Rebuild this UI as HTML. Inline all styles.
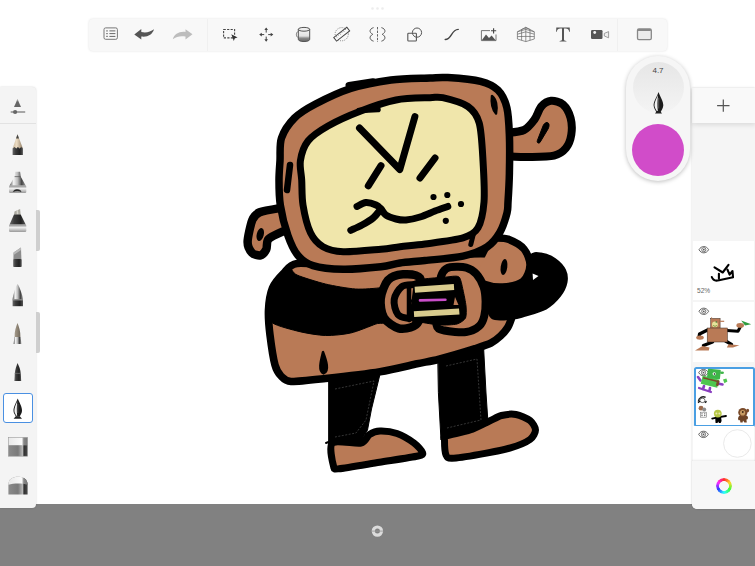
<!DOCTYPE html>
<html><head><meta charset="utf-8">
<style>
html,body{margin:0;padding:0;}
body{width:755px;height:566px;overflow:hidden;background:#818181;font-family:"Liberation Sans",sans-serif;position:relative;}
#canvas{position:absolute;left:0;top:0;width:755px;height:504px;background:#fff;}
#art{position:absolute;left:0;top:0;width:755px;height:566px;}
#toolbar{position:absolute;left:89px;top:19px;width:578px;height:32px;background:#f8f8f8;border-radius:4px;box-shadow:0 0 2.5px rgba(0,0,0,0.13);}
#toolbar .seg{position:absolute;top:0;height:32px;background:#f6f6f6;}
#left{position:absolute;left:0;top:87px;width:35.5px;height:421px;background:#f4f4f4;border-radius:0 4px 4px 0;box-shadow:0 0 2px rgba(0,0,0,0.18);}
#left .div{position:absolute;left:0;top:36px;width:36px;height:1px;background:#e2e2e2;}
#left .sel{position:absolute;left:3px;top:306px;width:28px;height:28px;border:1.5px solid #4a90e2;border-radius:3px;background:#fff;box-sizing:content-box;}
.sb{position:absolute;left:36px;width:4px;background:#cfcfcf;border-radius:0 2px 2px 0;}
#right{position:absolute;left:691.5px;top:88px;width:63.5px;height:421px;background:#f5f5f5;border-radius:0 0 0 5px;box-shadow:0 0 2px rgba(0,0,0,0.18);}
#right .plus{position:absolute;left:0;top:0;width:64px;height:35px;background:#f9f9f9;box-shadow:0 2px 5px rgba(0,0,0,0.11);}
.layer{position:absolute;left:1px;width:61px;background:#fff;}
#pill{position:absolute;left:626px;top:56px;width:64px;height:125px;border-radius:32px;background:#f6f6f6;box-shadow:0 1px 4px rgba(0,0,0,0.25);}
#pill .top{position:absolute;left:6.5px;top:6px;width:51px;height:51px;border-radius:26px;background:linear-gradient(#e6e6e6,#ededed 50%,#f4f4f4);}
#pill .col{position:absolute;left:6px;top:68px;width:52px;height:52px;border-radius:26px;background:#d14cc9;}
#pill .sz{position:absolute;left:0;top:10px;width:64px;text-align:center;font-size:8px;color:#444;}
.t{position:absolute;color:#555;}
</style></head><body>
<div id="canvas"></div>
<svg id="art" viewBox="0 0 755 566">
<!--ART-->
<path d="M332.5,443.0 C328.8,446.1 332.6,462.6 333.5,466.0 C334.4,469.4 332.9,469.3 339.0,468.8 C345.1,468.3 369.0,464.0 379.5,462.3 C390.0,460.6 412.3,457.3 418.0,456.0 C423.7,454.7 423.0,454.2 422.5,452.5 C422.0,450.8 417.4,445.5 414.0,443.0 C410.6,440.5 401.5,435.1 397.0,433.5 C392.5,431.9 383.7,430.9 380.0,431.0 C376.3,431.1 372.0,432.9 369.5,434.5 C367.0,436.1 365.9,441.9 361.0,443.0 C356.1,444.1 336.2,439.9 332.5,443.0Z" fill="#b97a56" stroke="#000" stroke-width="7" stroke-linejoin="round" stroke-linecap="round" />
<path d="M444.5,440.0 C444.5,442.5 445.0,452.6 446.0,455.0 C447.0,457.4 447.5,458.4 452.0,458.3 C456.5,458.2 471.7,455.8 479.5,454.4 C487.3,453.0 503.8,449.9 510.5,447.9 C517.2,445.9 526.7,441.9 530.0,439.5 C533.3,437.1 535.5,432.5 535.5,430.0 C535.5,427.5 532.6,422.6 530.0,420.5 C527.4,418.4 519.8,415.2 516.0,414.5 C512.2,413.8 505.0,414.6 501.5,415.5 C498.0,416.4 493.7,419.1 489.5,421.0 C485.3,422.9 475.8,428.0 470.0,430.0 C464.2,432.0 449.4,434.7 446.0,436.0 C442.6,437.3 444.5,437.5 444.5,440.0Z" fill="#b97a56" stroke="#000" stroke-width="7" stroke-linejoin="round" stroke-linecap="round" />
<path d="M329.0,376.0 L382.0,366.0 L371.5,409.0 L367.5,430.0 L360.0,443.0 L329.0,444.0Z" fill="#000" stroke="#000" stroke-width="1" stroke-linejoin="round" stroke-linecap="round" />
<path d="M438.0,352.0 L483.4,344.0 L486.0,393.0 L487.6,417.0 L487.6,425.0 L444.0,434.0 L441.0,440.0 L438.4,393.0Z" fill="#000" stroke="#000" stroke-width="1" stroke-linejoin="round" stroke-linecap="round" />
<path d="M326,443 L331,441" fill="none" stroke="#000" stroke-width="2" stroke-linejoin="round" stroke-linecap="round" />
<path d="M335,389 L374,381 L366,420 L356,433 L335,437" fill="none" stroke="#6a6a6a" stroke-width="0.5" stroke-dasharray="2 1.5"/>
<path d="M446,366 L477,359 L481,420 L447,428" fill="none" stroke="#6a6a6a" stroke-width="0.5" stroke-dasharray="2 1.5"/>
<path d="M297.0,263.5 C289.1,264.6 286.8,270.2 283.5,273.5 C280.2,276.8 274.5,283.1 272.5,288.0 C270.5,292.9 268.8,303.7 268.5,310.0 C268.2,316.3 269.1,327.7 270.0,335.0 C270.9,342.3 273.5,359.5 275.0,365.0 C276.5,370.5 278.9,373.8 281.0,376.0 C283.1,378.2 285.1,381.2 291.0,381.5 C296.9,381.8 313.6,379.8 325.5,378.5 C337.4,377.2 367.8,373.7 380.0,371.7 C392.2,369.7 409.1,365.5 417.0,363.8 C424.9,362.1 431.3,361.2 439.0,359.2 C446.7,357.2 468.1,350.9 475.0,348.7 C481.9,346.5 487.6,344.7 491.0,343.0 C494.4,341.3 498.2,338.1 500.5,336.0 C502.8,333.9 506.3,329.9 508.0,327.0 C509.7,324.1 511.4,318.9 513.0,314.0 C514.6,309.1 521.7,297.9 520.0,290.0 C518.3,282.1 516.0,259.3 500.0,255.0 C484.0,250.7 420.9,256.7 400.0,258.0 C379.1,259.3 356.7,264.3 343.0,265.0 C329.3,265.7 304.9,262.4 297.0,263.5Z" fill="#b97a56" stroke="#000" stroke-width="7.6" stroke-linejoin="round" stroke-linecap="round" />
<path d="M290.0,268.0 C292.0,268.3 292.3,272.9 297.0,275.0 C301.7,277.1 317.7,282.1 325.5,284.0 C333.3,285.9 348.3,288.5 355.7,289.0 C363.1,289.5 376.7,288.2 381.0,287.7 C385.3,287.2 387.3,280.7 388.0,285.0 C388.7,289.3 387.6,314.8 386.0,320.0 C384.4,325.2 380.5,322.3 375.8,324.0 C371.1,325.7 357.4,331.5 350.7,333.0 C344.0,334.5 332.3,335.7 325.5,335.5 C318.7,335.3 307.1,333.4 300.0,331.7 C292.9,330.0 276.8,325.9 272.6,323.0 C268.4,320.1 268.5,314.7 268.5,310.0 C268.5,305.3 270.7,292.9 272.5,288.0 C274.3,283.1 279.7,275.7 282.0,273.0 C284.3,270.3 288.0,267.7 290.0,268.0Z" fill="#000" stroke="#000" stroke-width="1" stroke-linejoin="round" stroke-linecap="round" />
<path d="M323,352 C321,360 317.8,371 323.5,373.5 C330,371 326,360 323,352Z" fill="#000" stroke="#000" stroke-width="2.4" stroke-linejoin="round" stroke-linecap="round" />
<path d="M530.5,256.0 C532.7,252.2 536.9,253.0 541.0,253.5 C545.1,254.0 551.0,256.2 555.0,259.0 C559.0,261.8 563.1,266.1 565.0,270.0 C566.9,273.9 567.3,278.1 566.5,282.4 C565.7,286.7 563.4,291.6 560.0,296.0 C556.6,300.4 552.0,305.2 546.0,308.5 C540.0,311.8 529.5,314.3 524.0,316.0 C518.5,317.7 518.3,318.2 513.0,318.5 C507.7,318.8 496.5,321.1 492.0,318.0 C487.5,314.9 487.3,306.2 486.0,300.0 C484.7,293.8 481.7,283.8 484.0,281.0 C486.3,278.2 494.3,282.7 500.0,283.0 C505.7,283.3 513.3,284.2 518.0,283.0 C522.7,281.8 525.9,280.5 528.0,276.0 C530.1,271.5 528.3,259.8 530.5,256.0Z" fill="#000" stroke="#000" stroke-width="2" stroke-linejoin="round" stroke-linecap="round" />
<path d="M532.6,273.5 L538.5,276.0 L533.0,280.0Z" fill="#fff" stroke="none" stroke-width="0" stroke-linejoin="round" stroke-linecap="round" />
<path d="M494.6,238.0 C496.8,238.2 504.6,237.8 509.0,239.5 C513.4,241.2 520.9,245.2 524.0,249.0 C527.1,252.8 530.1,260.1 530.0,265.0 C529.9,269.9 527.1,278.2 523.0,281.5 C518.9,284.8 508.5,286.6 502.6,287.0 C496.7,287.4 487.6,285.5 483.5,284.0 C479.4,282.5 476.3,278.1 475.0,277.0" fill="#b97a56" stroke="#000" stroke-width="7.5" stroke-linejoin="round" stroke-linecap="round" />
<ellipse cx="504" cy="267" rx="3.3" ry="8" fill="#000" transform="rotate(8 504 267)"/>
<path d="M443.0,272.0 C444.5,269.8 446.8,267.9 450.3,267.2 C453.8,266.5 462.3,266.6 466.2,267.6 C470.1,268.6 473.8,271.1 476.4,274.0 C479.0,276.9 482.2,282.9 483.6,287.0 C485.0,291.1 485.5,297.1 485.6,301.5 C485.7,305.9 485.2,312.3 484.3,316.0 C483.4,319.7 482.0,323.6 479.3,326.0 C476.6,328.4 471.4,331.3 466.2,332.0 C461.0,332.7 449.0,331.6 444.5,330.5 C440.0,329.4 437.2,329.6 436.5,325.0 C435.8,320.4 439.5,306.4 440.0,300.0 C440.5,293.6 439.6,286.2 440.0,282.0 C440.4,277.8 441.5,274.2 443.0,272.0Z" fill="#b97a56" stroke="#000" stroke-width="8" stroke-linejoin="round" stroke-linecap="round" />
<path d="M420.0,278.0 C417.3,274.1 407.8,274.0 403.0,274.3 C398.2,274.6 391.3,276.5 388.0,280.2 C384.7,283.9 381.3,293.1 380.7,298.7 C380.1,304.3 381.3,313.3 384.0,317.8 C386.7,322.3 394.3,327.1 398.7,328.4 C403.1,329.7 410.4,327.9 413.6,326.3 C416.8,324.7 418.9,321.7 420.0,317.8 C421.1,313.9 421.0,306.0 421.0,300.0 C421.0,294.0 422.7,281.9 420.0,278.0Z" fill="#b97a56" stroke="#000" stroke-width="8.5" stroke-linejoin="round" stroke-linecap="round" />
<path d="M411.0,283.0 C415.2,278.1 441.4,277.7 447.0,277.0 C452.6,276.3 457.1,275.5 459.0,277.0 C460.9,278.5 462.2,286.6 463.0,290.0 C463.8,293.4 465.7,302.7 466.0,306.0 C466.3,309.3 466.6,315.9 465.5,318.0 C464.4,320.1 460.0,323.2 457.0,324.0 C454.0,324.8 444.3,325.2 440.0,325.0 C435.7,324.8 423.4,322.7 420.0,322.0 C416.6,321.3 412.1,323.6 411.0,319.0 C409.9,314.4 406.8,287.9 411.0,283.0Z" fill="#000" stroke="#000" stroke-width="1" stroke-linejoin="round" stroke-linecap="round" />
<path d="M413.6,284.6 C411.7,284.9 405.2,284.0 402.0,286.5 C398.8,289.0 394.9,294.8 394.2,299.5 C393.5,304.2 395.5,311.4 398.0,314.6 C400.5,317.8 407.4,317.9 409.3,318.6" fill="#b97a56" stroke="#000" stroke-width="7" stroke-linejoin="round" stroke-linecap="round" />
<path d="M409,288 L409,315" fill="none" stroke="#000" stroke-width="4.5" stroke-linejoin="round" stroke-linecap="round" />
<path d="M409,301 L413,301" fill="none" stroke="#000" stroke-width="3" stroke-linejoin="round" stroke-linecap="round" />
<path d="M414.6,286.8 L453.8,284.0 L454.2,290.0 L415.0,292.8Z" fill="#d9cc8e" stroke="none" stroke-width="0" stroke-linejoin="round" stroke-linecap="round" />
<path d="M413.8,311.2 L459.0,308.6 L459.5,314.4 L414.2,317.0Z" fill="#d9cc8e" stroke="none" stroke-width="0" stroke-linejoin="round" stroke-linecap="round" />
<path d="M420,300.4 L445.4,299.8" fill="none" stroke="#c94ec9" stroke-width="2.6" stroke-linejoin="round" stroke-linecap="round" />
<path d="M455.0,297.0 L458.5,305.0 L453.5,305.0Z" fill="#b97a56" stroke="none" stroke-width="0" stroke-linejoin="round" stroke-linecap="round" />
<path d="M506.0,133.0 C508.7,132.6 519.7,132.0 524.0,130.0 C528.3,128.0 531.9,123.0 534.5,119.5 C537.1,116.0 538.8,109.3 541.3,106.5 C543.8,103.7 547.7,101.1 551.0,100.8 C554.3,100.5 560.1,101.9 563.0,104.5 C565.9,107.1 569.4,113.5 570.6,118.0 C571.8,122.5 572.0,130.1 571.3,134.6 C570.6,139.1 568.6,144.8 566.0,148.0 C563.4,151.2 559.4,154.2 554.0,155.6 C548.6,156.9 537.2,156.9 530.0,157.0 C522.8,157.1 509.6,156.2 506.0,156.0" fill="#b97a56" stroke="#000" stroke-width="8" stroke-linejoin="round" stroke-linecap="round" />
<path d="M546.8,122.6 C549.6,122.4 549.6,126 548,129 L540,142.4 C538.4,144 536.6,142.6 537.4,140.4 L543,126 C543.8,124 545,122.8 546.8,122.6Z" fill="#000" stroke="#000" stroke-width="1" stroke-linejoin="round" stroke-linecap="round" />
<path d="M283.0,207.5 C279.9,208.1 263.8,210.6 259.7,212.3 C255.6,214.0 253.9,216.0 252.3,220.0 C250.7,224.0 247.6,237.6 247.6,242.0 C247.6,246.4 250.3,251.0 252.0,252.8 C253.7,254.6 258.6,255.8 260.5,255.3 C262.4,254.8 265.2,251.6 266.3,249.4 C267.4,247.2 266.1,241.5 268.6,239.0 C271.1,236.5 282.8,231.6 285.0,230.5" fill="#b97a56" stroke="#000" stroke-width="8.5" stroke-linejoin="round" stroke-linecap="round" />
<ellipse cx="260.4" cy="234.6" rx="3.5" ry="6.6" fill="#000" transform="rotate(15 260.7 234)"/>
<path d="M294.5,118.0 C299.6,112.9 307.1,108.4 315.5,104.0 C323.9,99.6 339.4,92.1 350.7,88.5 C362.0,84.9 379.1,81.6 391.0,80.0 C402.9,78.4 421.5,78.4 430.0,78.0 C438.5,77.6 440.1,77.1 447.7,77.6 C455.3,78.1 473.0,79.5 480.5,81.4 C488.0,83.3 494.0,86.2 498.0,90.2 C502.0,94.2 505.2,101.0 506.9,107.8 C508.6,114.6 509.0,125.7 509.4,135.5 C509.8,145.3 509.6,163.0 509.4,173.0 C509.2,183.0 508.4,196.0 508.0,202.0 C507.6,208.0 508.2,208.4 507.0,213.0 C505.8,217.6 502.8,227.4 499.8,232.5 C496.8,237.6 492.5,243.4 487.0,247.0 C481.5,250.6 472.3,254.2 463.0,256.2 C453.7,258.2 434.4,259.5 425.0,260.5 C415.6,261.5 406.6,262.1 400.0,263.0 C393.4,263.9 389.5,265.9 381.0,266.8 C372.5,267.7 353.4,269.5 343.2,269.3 C333.0,269.1 319.8,267.7 313.0,265.6 C306.2,263.5 301.8,260.0 298.0,255.5 C294.2,251.0 290.6,243.0 287.9,235.4 C285.2,227.8 281.6,213.3 280.3,205.0 C279.0,196.7 279.0,186.6 279.0,180.0 C279.0,173.4 279.6,167.0 280.0,160.7 C280.4,154.4 279.3,144.4 281.5,138.0 C283.7,131.6 289.4,123.1 294.5,118.0Z" fill="#b97a56" stroke="#000" stroke-width="7.5" stroke-linejoin="round" stroke-linecap="round" />
<path d="M308.0,141.0 C312.1,135.8 320.1,130.5 328.0,126.0 C335.9,121.5 350.6,114.9 360.8,111.0 C371.0,107.1 385.6,102.0 396.0,100.0 C406.4,98.0 423.0,98.0 430.0,97.7 C437.0,97.4 437.0,96.4 442.7,97.7 C448.4,99.0 462.4,102.7 467.9,106.5 C473.4,110.3 476.9,114.9 479.2,123.0 C481.5,131.1 482.3,148.8 483.0,160.7 C483.7,172.5 484.8,191.9 484.0,202.0 C483.2,212.1 481.1,222.4 478.0,227.8 C474.9,233.2 470.9,235.5 463.0,237.9 C455.1,240.3 434.4,242.7 425.0,244.0 C415.6,245.3 406.6,245.9 400.0,246.7 C393.4,247.5 389.5,248.4 381.0,249.2 C372.5,249.9 351.9,252.1 343.2,251.7 C334.5,251.3 327.9,249.5 323.0,246.7 C318.1,243.9 313.5,239.1 310.5,232.8 C307.5,226.5 304.3,212.9 303.0,205.0 C301.7,197.1 302.1,186.6 301.7,180.0 C301.3,173.4 299.5,166.5 300.4,160.7 C301.3,154.8 303.9,146.2 308.0,141.0Z" fill="#f0e6ab" stroke="#000" stroke-width="7" stroke-linejoin="round" stroke-linecap="round" />
<path d="M290,165 L287,190" fill="none" stroke="#000" stroke-width="6.5" stroke-linejoin="round" stroke-linecap="round" />
<path d="M349,85.4 L373,81.8" fill="none" stroke="#000" stroke-width="7" stroke-linejoin="round" stroke-linecap="round" />
<path d="M359,110.6 L378,109.6" fill="none" stroke="#000" stroke-width="5.5" stroke-linejoin="round" stroke-linecap="round" />
<path d="M492,96 C491,104 493,110 496,113.5 C497.5,106 496,99 492,96Z" fill="#000" stroke="#000" stroke-width="2.5" stroke-linejoin="round" stroke-linecap="round" />
<path d="M473.4,234 L470.8,244.5" fill="none" stroke="#000" stroke-width="5" stroke-linejoin="round" stroke-linecap="round" />
<path d="M359.5,128 L399.8,169.5 L414.9,116.6" fill="none" stroke="#000" stroke-width="7" stroke-linejoin="round" stroke-linecap="round" />
<path d="M381,165.7 L368.3,185.8" fill="none" stroke="#000" stroke-width="7" stroke-linejoin="round" stroke-linecap="round" />
<path d="M435,158 L420,178" fill="none" stroke="#000" stroke-width="7" stroke-linejoin="round" stroke-linecap="round" />
<path d="M357.0,206.4 C358.5,205.8 362.7,202.8 365.9,202.6 C369.1,202.4 373.5,203.9 376.0,205.0 C378.5,206.1 379.3,207.3 381.0,209.0 C382.7,210.7 383.5,213.5 386.0,215.2 C388.5,216.9 392.7,218.2 396.0,219.0 C399.3,219.8 402.0,220.3 406.0,220.0 C410.0,219.7 415.2,218.5 420.0,217.0 C424.8,215.5 430.4,212.8 435.0,211.0 C439.6,209.2 445.7,207.2 447.8,206.4" fill="none" stroke="#000" stroke-width="7" stroke-linejoin="round" stroke-linecap="round" />
<path d="M350.8,230.3 C352.7,229.4 358.2,227.1 362.0,225.0 C365.8,222.9 370.2,220.4 373.4,217.7 C376.6,215.0 379.7,210.4 381.0,209.0" fill="none" stroke="#000" stroke-width="7" stroke-linejoin="round" stroke-linecap="round" />
<circle cx="433.5" cy="197" r="3.1" fill="#000"/>
<circle cx="447.3" cy="195" r="3.1" fill="#000"/>
<circle cx="461" cy="204" r="3.1" fill="#000"/>
<circle cx="445.8" cy="220.8" r="3.1" fill="#000"/>
<!--/ART-->
</svg>
<div id="toolbar">
<div class="seg" style="left:118px;width:1px;background:#f0f0f0"></div>
<div class="seg" style="left:528px;width:1px;background:#f0f0f0"></div>
<svg width="578" height="32" viewBox="89 19 578 32" style="position:absolute;left:0;top:0">
<!--TB-->
<rect x="104" y="27.9" width="13.4" height="11.4" rx="1.6" fill="none" stroke="#777" stroke-width="1"/>
<rect x="106.3" y="30.3" width="1.4" height="1.2" fill="#666"/>
<rect x="109.4" y="30.4" width="6" height="1" fill="#666"/>
<rect x="106.3" y="33.0" width="1.4" height="1.2" fill="#666"/>
<rect x="109.4" y="33.1" width="6" height="1" fill="#666"/>
<rect x="106.3" y="35.8" width="1.4" height="1.2" fill="#666"/>
<rect x="109.4" y="35.9" width="6" height="1" fill="#666"/>
<path d="M134.3,34.4 L141.3,29 L141.3,32 C146,33 150.5,32 154,29.3 C152.5,34.5 147.5,37.5 141.3,36.6 L141.3,39.4 Z" fill="#555"/>
<path d="M134.3,34.4 L141.3,29 L141.3,32 C146,33 150.5,32 154,29.3 C152.5,34.5 147.5,37.5 141.3,36.6 L141.3,39.4 Z" fill="#bdbdbd" transform="rotate(180 163.4 34.3)"/>
<rect x="223.6" y="29.5" width="11" height="8.4" fill="none" stroke="#444" stroke-width="1.1" stroke-dasharray="2.2 1.3"/>
<path d="M231.3,34.2 L237.6,37.6 L234.8,38.2 L233.8,41 Z" fill="#333"/>
<g stroke="#444" stroke-width="1" fill="none"><path d="M266.2,28.5 V32.6 M266.2,36.6 V40.7 M260.2,34.6 H264.2 M268.2,34.6 H272.3"/></g>
<g fill="#444"><path d="M266.2,27.4 L268,30 H264.4Z"/><path d="M266.2,41.8 L268,39.2 H264.4Z"/><path d="M259.2,34.6 L261.8,32.8 V36.4Z"/><path d="M273.3,34.6 L270.7,32.8 V36.4Z"/></g>
<defs><linearGradient id="bk" x1="0" y1="0" x2="0" y2="1"><stop offset="0" stop-color="#f4f4f4"/><stop offset="0.55" stop-color="#e2e2e2"/><stop offset="0.72" stop-color="#8a8a8a"/><stop offset="1" stop-color="#666"/></linearGradient></defs>
<path d="M298.3,29.3 V39.3 C298.3,42.3 309.7,42.3 309.7,39.3 V29.3Z" fill="url(#bk)" stroke="#555" stroke-width="1"/>
<ellipse cx="304" cy="29.3" rx="5.7" ry="1.9" fill="#eee" stroke="#555" stroke-width="1"/>
<path d="M299,31 C295.5,32 295.5,37 299,38" fill="none" stroke="#666" stroke-width="0.9"/>
<circle cx="341.7" cy="34.2" r="6.6" fill="none" stroke="#666" stroke-width="0.8" stroke-dasharray="1 1.2"/>
<g transform="rotate(-38 341.7 34.2)"><rect x="333.4" y="31.9" width="16.6" height="4.6" fill="#f9f9f9" stroke="#444" stroke-width="1"/><path d="M336,31.9 v2 M338.3,31.9 v1.5 M340.6,31.9 v2 M342.9,31.9 v1.5 M345.2,31.9 v2 M347.5,31.9 v1.5" stroke="#666" stroke-width="0.6"/></g>
<path d="M377.5,27 V42" stroke="#555" stroke-width="0.9" stroke-dasharray="2.4 1.2" fill="none"/>
<path d="M373.6,27.6 C369,29 369,32.5 372.8,34.3 C369,36.2 369,39.8 373.6,41.2" fill="none" stroke="#555" stroke-width="0.95"/>
<path d="M381.4,27.6 C386,29 386,32.5 382.2,34.3 C386,36.2 386,39.8 381.4,41.2" fill="none" stroke="#555" stroke-width="0.95"/>
<circle cx="417" cy="32.6" r="4.6" fill="none" stroke="#555" stroke-width="1"/>
<rect x="407.8" y="33.2" width="8.6" height="7.8" rx="0.8" fill="none" stroke="#555" stroke-width="1.1"/>
<path d="M445.2,39.5 C452,39.5 451,29.6 458.2,29.4" fill="none" stroke="#444" stroke-width="1.4" stroke-linecap="round"/>
<path d="M490,30.6 H481.4 V40.6 H496 V34.5" fill="none" stroke="#666" stroke-width="0.9"/>
<path d="M481.8,40.2 L486,34.6 L489,38 L491.6,35.6 L495.6,40.2Z" fill="#555"/>
<path d="M493.6,28.2 V33.4 M491,30.8 H496.2" stroke="#444" stroke-width="1.1"/>
<g fill="none" stroke="#666" stroke-width="0.7"><path d="M525.8,27.2 L517.4,31.8 V39 L525.8,41.6 L534.3,39 V31.8Z"/><path d="M525.8,27.2 V41.6 M521.6,29.5 V40.3 M530,29.5 V40.3 M517.4,34.2 L525.8,31.8 L534.3,34.2 M517.4,36.6 L525.8,36.4 L534.3,36.6 M517.4,31.8 L525.8,29.4 L534.3,31.8 M521.6,29.5 L525.8,27.9 L530,29.5"/></g>
<path d="M556.3,27.6 H569.7 L569.9,31.8 H569.2 C568.8,29.4 567.8,28.5 565.6,28.5 H564 V39.2 C564,40.5 564.5,40.8 566.4,40.9 V41.5 H559.6 V40.9 C561.5,40.8 562,40.5 562,39.2 V28.5 H560.4 C558.2,28.5 557.2,29.4 556.8,31.8 H556.1Z" fill="#555"/>
<rect x="591" y="30" width="11.5" height="9" rx="1.2" fill="#555"/>
<circle cx="594.7" cy="32.5" r="1.4" fill="#f4f4f4"/>
<path d="M604.3,33.4 L608.6,31.6 V37.8 L604.3,36Z" fill="#eee" stroke="#888" stroke-width="0.8"/>
<rect x="637.5" y="29" width="13.8" height="10.6" rx="1.4" fill="#ececec" stroke="#888" stroke-width="1.3"/>
<rect x="638" y="29" width="12.8" height="2" fill="#888"/>
<!--/TB-->
</svg>
</div>
<div id="left"><div class="div"></div><div class="sel"></div></div>
<div class="sb" style="top:210px;height:41px"></div>
<div class="sb" style="top:312px;height:41px"></div>
<div id="right"><div class="plus"></div>
<div class="layer" style="top:153px;height:59px"></div>
<div class="layer" style="top:214px;height:60px"></div>
<div class="layer" style="top:278.5px;height:56.5px;border:2px solid #4a9fe3;border-radius:2.5px;left:2px;width:57.5px;"></div>
<div class="layer" style="top:337.5px;height:35px"></div>
<div style="position:absolute;left:0;top:373px;width:64px;height:48px;background:#f7f7f7;border-radius:0 0 0 5px;box-shadow:0 -1px 2px rgba(0,0,0,0.08)"></div>
<div style="position:absolute;left:24.4px;top:389.6px;width:16px;height:16px;border-radius:50%;background:conic-gradient(from 0deg,#ff2a2a,#ffd92a,#3cff3c,#2affff,#2a3cff,#ff2aff,#ff2a2a);-webkit-mask:radial-gradient(circle,transparent 4.6px,#000 5.2px);mask:radial-gradient(circle,transparent 4.6px,#000 5.2px)"></div>
</div>
<div id="pill"><div class="top"></div><div class="col"></div><div class="sz">4.7</div></div>
<svg id="ui" viewBox="0 0 755 566" style="position:absolute;left:0;top:0;width:755px;height:566px">
<!--UI-->
<defs>
<linearGradient id="chrome" x1="0" y1="0" x2="1" y2="0"><stop offset="0" stop-color="#555"/><stop offset="0.25" stop-color="#f4f4f4"/><stop offset="0.5" stop-color="#bbb"/><stop offset="0.75" stop-color="#444"/><stop offset="1" stop-color="#999"/></linearGradient>
<linearGradient id="dark" x1="0" y1="0" x2="1" y2="0"><stop offset="0" stop-color="#666"/><stop offset="0.3" stop-color="#3a3a3a"/><stop offset="0.7" stop-color="#222"/><stop offset="1" stop-color="#555"/></linearGradient>
<linearGradient id="wood" x1="0" y1="0" x2="1" y2="0"><stop offset="0" stop-color="#c9b79c"/><stop offset="0.4" stop-color="#ecdcc3"/><stop offset="1" stop-color="#8d7a62"/></linearGradient>
<linearGradient id="silver" x1="0" y1="0" x2="0" y2="1"><stop offset="0" stop-color="#888"/><stop offset="0.4" stop-color="#eee"/><stop offset="1" stop-color="#999"/></linearGradient>
<linearGradient id="er" x1="0" y1="0" x2="1" y2="0"><stop offset="0" stop-color="#8b8b8b"/><stop offset="0.5" stop-color="#7a7a7a"/><stop offset="0.76" stop-color="#bdbdbd"/><stop offset="0.8" stop-color="#2e2e2e"/><stop offset="1" stop-color="#4a4a4a"/></linearGradient>
<linearGradient id="ert" x1="0" y1="0" x2="1" y2="0"><stop offset="0" stop-color="#e9e9e9"/><stop offset="0.7" stop-color="#fafafa"/><stop offset="0.8" stop-color="#888"/><stop offset="1" stop-color="#777"/></linearGradient>
<linearGradient id="tan" x1="0" y1="0" x2="1" y2="0"><stop offset="0" stop-color="#a59b8c"/><stop offset="0.5" stop-color="#8d8374"/><stop offset="1" stop-color="#6f675b"/></linearGradient>
</defs>
<path d="M17.5,99.3 L21,107 H14Z" fill="#666"/><path d="M16.6,101.2 H18.4 L17.5,99.3Z" fill="#999"/>
<path d="M10.7,112 H25.2" stroke="#666" stroke-width="1.1"/><circle cx="15.1" cy="112" r="2.1" fill="#666"/>
<path d="M17.5,134.3 L22.9,148.5 H12.6Z" fill="url(#wood)"/>
<path d="M17.5,134.3 L19,138.4 H16Z" fill="#444"/>
<path d="M12.6,148.5 L14.5,147 L16.3,148.5 L17.9,147 L19.6,148.5 L21.2,147 L22.9,148.5 V155 H12.6Z" fill="url(#dark)"/>
<path d="M15.2,171.8 H20.1 L20.8,176.8 L25.7,185.6 H9.6 L14.5,176.8Z" fill="url(#chrome)"/>
<path d="M14.6,176.6 H20.7" stroke="#555" stroke-width="0.7"/>
<rect x="9" y="185.6" width="17.3" height="7.3" rx="1.2" fill="url(#silver)"/>
<path d="M13.4,191.4 C14.4,189.2 19.6,189 21,191.4 C19,190.6 15.4,190.6 13.4,191.4Z" fill="#222" stroke="#222" stroke-width="0.8"/>
<path d="M14.5,211.5 L20.1,209 L20.7,214.8 H14Z" fill="#aaa89f"/><path d="M16.5,210.6 L18,210 L18.4,214.8 H16.8Z" fill="#d6d4cc"/>
<path d="M14,214.6 H20.7 L25.7,224.6 H9.6Z" fill="url(#dark)"/>
<rect x="9" y="224.6" width="17.3" height="7.4" rx="1.2" fill="url(#silver)"/>
<path d="M13.6,252.6 L21,247.4 L21.4,259.2 H13.4Z" fill="#8c8c8c"/><path d="M13.6,252.6 L21,247.4 L21.1,250 L13.6,255Z" fill="#b8b8b8"/>
<rect x="13.2" y="259" width="8.5" height="8" rx="0.8" fill="url(#dark)"/>
<path d="M17.5,283.9 C18.6,284.5 23,296 23,299.6 H12.6 C12.6,296 16.4,284.5 17.5,283.9Z" fill="url(#chrome)"/>
<rect x="12.6" y="299.4" width="10.4" height="6.8" fill="url(#dark)"/><rect x="12.6" y="299.4" width="10.4" height="1" fill="#999"/>
<path d="M17.5,323 C19,327 20.6,331 20.4,337.2 H14.6 C14.4,331 16,327 17.5,323Z" fill="url(#tan)"/>
<path d="M14.4,337 H20.6 L21.4,344 H13.6Z" fill="url(#chrome)"/>
<path d="M17.5,363 C19,366 20.6,370 20.8,373.5 L21.2,381 H14.4 L14.8,373.5 C15,370 16.4,366 17.5,363Z" fill="url(#dark)"/>
<path d="M14.7,373.4 H21" stroke="#777" stroke-width="0.7"/>
<path d="M17.7,398.6 C19,402 22.3,407 22,411 C21.8,413.5 20.4,415 19.8,416.4 H15.8 C15.2,415 13.6,413.5 13.5,411 C13.3,407 16.6,402 17.7,398.6Z" fill="#1c1c1c"/>
<path d="M17.3,401.2 C15.6,405 14.2,408.4 14.4,411 C14.6,413 15.6,414.4 16.4,415.8 H17.2 C16.6,411 16.8,406 17.3,401.2Z" fill="#f0f0f0"/>
<path d="M17.8,404 V413" stroke="#777" stroke-width="0.6"/>
<path d="M15.8,416.2 H19.8 L22,418.8 H13.6Z" fill="#222"/>
<rect x="8.4" y="437.4" width="19.2" height="8" fill="url(#ert)"/>
<rect x="8.4" y="445.2" width="19.2" height="11" fill="url(#er)"/>
<rect x="8.4" y="437.4" width="19.2" height="18.8" fill="none" stroke="#9a9a9a" stroke-width="0.6"/>
<path d="M8.4,494.4 V484 C8.4,474.2 27.6,474.2 27.6,484 V494.4Z" fill="url(#er)"/>
<path d="M8.4,484 C8.4,474.2 27.6,474.2 27.6,484 V484.8 C22,483 14,483 8.4,484.8Z" fill="url(#ert)"/>
<circle cx="377.4" cy="531.1" r="4.1" fill="none" stroke="#dcdcdc" stroke-width="3.2"/><path d="M371.5,531.1 H383.3" stroke="#9a9a9a" stroke-width="0.9"/>
<g fill="#ededed"><circle cx="372.5" cy="8.5" r="1.3"/><circle cx="377.5" cy="8.5" r="1.3"/><circle cx="382.5" cy="8.5" r="1.3"/></g>
<path d="M658.5,91.9 C659.8,96 663.6,101 663.3,105.6 C663.1,108.6 661.4,110.4 660.7,112 H656.3 C655.6,110.4 653.8,108.6 653.6,105.6 C653.3,101 657.4,96 658.5,91.9Z" fill="#1c1c1c"/>
<path d="M658,95 C656.2,99.4 654.3,102.6 654.5,105.6 C654.7,107.8 655.8,109.4 656.8,111 H657.8 C657.2,106 657.4,100 658,95Z" fill="#f2f2f2"/>
<path d="M658.7,98 V108.5" stroke="#888" stroke-width="0.6"/>
<path d="M656.3,111.8 H660.7 L662,113.4 H655Z" fill="#222"/>
<path d="M723.3,99.4 V111.8 M717.1,105.6 H729.5" stroke="#555" stroke-width="1.2"/>
<path d="M699.0,249.7 C701.2,245.5 706.4,245.5 708.6,249.7 C706.4,253.9 701.2,253.9 699.0,249.7 Z" fill="#fff" stroke="#555" stroke-width="0.9"/><circle cx="703.8" cy="249.7" r="2.1" fill="none" stroke="#555" stroke-width="0.8"/><circle cx="703.8" cy="249.7" r="0.9" fill="#555"/>
<path d="M699.0,311.3 C701.2,307.1 706.4,307.1 708.6,311.3 C706.4,315.5 701.2,315.5 699.0,311.3 Z" fill="#fff" stroke="#555" stroke-width="0.9"/><circle cx="703.8" cy="311.3" r="2.1" fill="none" stroke="#555" stroke-width="0.8"/><circle cx="703.8" cy="311.3" r="0.9" fill="#555"/>
<path d="M698.7,372.6 C700.9,368.4 706.1,368.4 708.3,372.6 C706.1,376.8 700.9,376.8 698.7,372.6 Z" fill="#fff" stroke="#555" stroke-width="0.9"/><circle cx="703.5" cy="372.6" r="2.1" fill="none" stroke="#555" stroke-width="0.8"/><circle cx="703.5" cy="372.6" r="0.9" fill="#555"/>
<path d="M698.7,434.4 C700.9,430.2 706.1,430.2 708.3,434.4 C706.1,438.6 700.9,438.6 698.7,434.4 Z" fill="#fff" stroke="#555" stroke-width="0.9"/><circle cx="703.5" cy="434.4" r="2.1" fill="none" stroke="#555" stroke-width="0.8"/><circle cx="703.5" cy="434.4" r="0.9" fill="#555"/>
<g fill="none" stroke="#000" stroke-width="2.1" stroke-linecap="round" stroke-linejoin="round"><path d="M714.5,267.3 L722.7,272.5 L728.5,264.8"/><path d="M727.4,269.5 L729.6,274.7 L732.5,271 L733,277.2"/><path d="M711.8,277 C713,280.5 716,281 719,280.2 L733,277.2"/><path d="M718.9,273.8 V278.6"/></g>
<text x="697" y="293.2" font-family="Liberation Sans, sans-serif" font-size="6.6" fill="#666">52%</text>
<g>
<path d="M707.5,330 L699.5,334 L699,337" fill="none" stroke="#000" stroke-width="3.2" stroke-linecap="round" stroke-linejoin="round"/>
<path d="M727,330.6 L738,331.2 L740.5,326.5" fill="none" stroke="#000" stroke-width="3" stroke-linecap="round" stroke-linejoin="round"/>
<path d="M712.5,342 L703.5,345.5" fill="none" stroke="#000" stroke-width="3.4" stroke-linecap="round"/>
<path d="M725.6,341 L731.5,344.4" fill="none" stroke="#000" stroke-width="3.4" stroke-linecap="round"/>
<rect x="710.7" y="318.4" width="9.4" height="9.8" fill="#b97a56" stroke="#3a2a20" stroke-width="0.5"/>
<path d="M711,318.6 L711.4,316.8 L712.6,318.6Z" fill="#b97a56"/>
<path d="M720,321.3 H724.2" stroke="#b97a56" stroke-width="1.2"/>
<circle cx="714.9" cy="324.4" r="2.9" fill="#e6e39a"/><path d="M713,325.2 C714,326.6 716,326.6 717,325.2" stroke="#5a7d2a" stroke-width="0.7" fill="none"/><circle cx="716.3" cy="322" r="0.8" fill="#3c7a34"/>
<rect x="707.2" y="328" width="20.2" height="14" fill="#b97a56" stroke="#3a2a20" stroke-width="0.5"/>
<ellipse cx="700" cy="337.6" rx="3.8" ry="2.2" fill="#b97a56"/>
<ellipse cx="740.2" cy="325.4" rx="3.8" ry="2.3" fill="#b97a56"/>
<path d="M741.2,320.6 L751.2,324.2 L745,325.4Z" fill="#2f9c3f"/>
<path d="M695,350.4 L702.5,346 L709.5,347.5 L708.8,350.4Z" fill="#b97a56"/>
<path d="M726.8,347.6 L728.5,344.2 L739.4,345.2 L733,347.6Z" fill="#b97a56"/>
</g>
<g>
<path d="M699,388 L711,392" stroke="#8a3fc0" stroke-width="2.2" stroke-linecap="round"/>
<path d="M698,377 L700.5,380.5 M718,383.5 L722.5,384.5 M704,386 L703,389 M710,388 L709.5,390.5" stroke="#8a3fc0" stroke-width="2.6" stroke-linecap="round"/>
<rect x="701.5" y="377.5" width="17" height="8.4" fill="#4fc64f" transform="rotate(14 710 381.5)"/>
<path d="M703.2,377.8 L719,381.8" stroke="#7a4a2a" stroke-width="1.6"/>
<rect x="716.5" y="380.4" width="2.6" height="5.6" fill="#7a4a2a" transform="rotate(14 717.8 383)"/>
<rect x="707.4" y="369.2" width="13" height="9.6" rx="1" fill="#3eb548" transform="rotate(6 714 374)"/>
<circle cx="714.2" cy="373.8" r="1.6" fill="#fff"/><circle cx="714.4" cy="374" r="0.8" fill="#000"/>
<ellipse cx="722" cy="372.8" rx="2" ry="1.3" fill="#3eb548"/>
<path d="M723,379.4 L726.4,378.4 L727.4,381.6 L724.4,383.2Z" fill="#4fc64f"/>
<path d="M698.4,401.4 C698.6,397.4 702.6,395.8 705.6,397.4" fill="none" stroke="#222" stroke-width="1.5"/><ellipse cx="702.4" cy="400.4" rx="2.6" ry="2.2" fill="#fff" stroke="#333" stroke-width="0.7"/><path d="M698,402.6 L700.2,401 M704.8,402.6 L706.6,401.4" stroke="#111" stroke-width="1.3"/>
<ellipse cx="701" cy="408.2" rx="2.4" ry="2.4" fill="#9c6a4c"/><ellipse cx="704.2" cy="409.6" rx="2" ry="2" fill="#8d8d8d"/>
<rect x="700.4" y="412.2" width="6" height="5" fill="#fff" stroke="#777" stroke-width="0.6"/><circle cx="702" cy="413.8" r="0.6" fill="#333"/><circle cx="704.8" cy="415.6" r="0.6" fill="#333"/><circle cx="704.8" cy="413.8" r="0.6" fill="#333"/><circle cx="702" cy="415.6" r="0.6" fill="#333"/>
<path d="M712.2,418.6 L717.5,417.4 L726,416" stroke="#000" stroke-width="1.8" stroke-linecap="round" fill="none"/>
<path d="M715.2,416.4 H721 L721.6,421 L720.6,423 H718.8 L718.4,421.4 L717.4,423 H715.6 L715.4,421Z" fill="#000"/>
<circle cx="717.8" cy="413.6" r="3.9" fill="#b6c646"/><circle cx="716.4" cy="413.6" r="1" fill="#e8e8b0"/><circle cx="719.4" cy="413.6" r="1" fill="#e8e8b0"/>
<path d="M739,416 C737,419 738.6,421 740,420 L740.4,422.4 H742.6 L743,420.4 L744.4,422.4 H746.8 L746.4,419.6 C748.6,419 748.4,416.6 746.6,415.4Z" fill="#6d4326"/>
<ellipse cx="742.8" cy="412.4" rx="4.6" ry="4.4" fill="#7a4b2a"/><ellipse cx="742.6" cy="412.8" rx="2.6" ry="2.8" fill="#c79b63"/><circle cx="742.8" cy="412" r="0.9" fill="#3a2414"/>
<ellipse cx="747.8" cy="410.6" rx="1.3" ry="1.8" fill="#7a4b2a"/>
</g>
<circle cx="737.4" cy="443.5" r="13.8" fill="#fff" stroke="#e6e6e6" stroke-width="0.9"/>
<!--/UI-->
</svg>
</body></html>
